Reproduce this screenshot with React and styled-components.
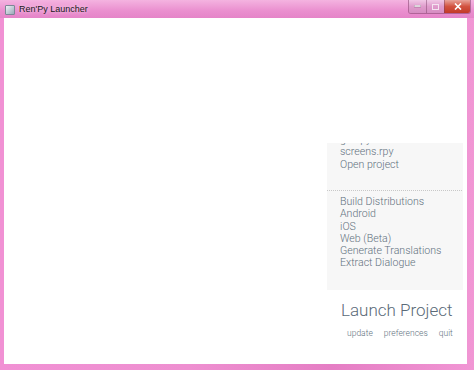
import React from "react";
import styled, { createGlobalStyle } from "styled-components";

const Global = createGlobalStyle`
  html, body { margin: 0; padding: 0; }
  body { width: 474px; height: 370px; overflow: hidden; font-family: Roboto, "Noto Sans", sans-serif; }
`;

const Frame = styled.div`
  width: 474px;
  height: 370px;
  display: flex;
  flex-direction: column;
  background: linear-gradient(90deg, #f191d4 0%, #ee8fd0 40%, #e57ec4 70%, #f196d4 100%);
  box-sizing: border-box;
`;

const TitleBar = styled.div`
  height: 18px;
  display: flex;
  align-items: flex-start;
  position: relative;
  background: linear-gradient(180deg, #f4b3e0 0%, #ea8fcf 60%, #e584c8 100%);
`;

const AppIcon = styled.div`
  width: 8px;
  height: 8px;
  margin: 5px 4px 0 5px;
  background: linear-gradient(135deg, #eef2f6, #9aa8b8);
  border: 1px solid #7c8896;
  border-radius: 1px;
`;

const Title = styled.div`
  font-family: "Liberation Sans", Arial, sans-serif;
  font-size: 9px;
  color: #1a1a1a;
  margin-top: 4px;
  text-shadow: 0 0 4px rgba(255,255,255,0.8);
`;

const Controls = styled.div`
  margin-left: auto;
  margin-right: 3px;
  display: flex;
  height: 13px;
  border: 1px solid rgba(120, 60, 100, 0.5);
  border-top: none;
  border-radius: 0 0 3px 3px;
  overflow: hidden;
`;

const CtrlButton = styled.div`
  width: ${p => p.$w}px;
  height: 13px;
  display: flex;
  align-items: center;
  justify-content: center;
  background: ${p => p.$close
    ? "linear-gradient(180deg, #e8a39a 0%, #d2523f 50%, #c23a28 100%)"
    : "linear-gradient(180deg, #f1c8e6 0%, #df9ccc 50%, #d68cc2 100%)"};
  border-left: ${p => p.$first ? "none" : "1px solid rgba(120,60,100,0.45)"};
`;

const Client = styled.div`
  flex: 1;
  margin: 0 7px 6px 4px;
  background: #ffffff;
  display: flex;
  justify-content: flex-end;
`;

const RightColumn = styled.div`
  width: 136px;
  margin-right: 4px;
  padding-top: 125px;
  display: flex;
  flex-direction: column;
`;

const Panel = styled.div`
  background: #f7f7f7;
  display: flex;
  flex-direction: column;
  height: 147px;
  box-sizing: border-box;
`;

const Viewport = styled.div`
  height: 40px;
  overflow: hidden;
  padding-left: 13px;
`;

const ScrollList = styled.div`
  margin-top: -9px;
  display: flex;
  flex-direction: column;
`;

const Item = styled.div`
  font-family: Roboto, "Noto Sans", sans-serif;
  font-weight: 300;
  font-size: 10.6px;
  line-height: 12.3px;
  color: #62717e;
  white-space: nowrap;
`;

const Separator = styled.div`
  margin: 7px 1px 5px 0;
  height: 0;
  border-top: 1px dotted #c8c8c8;
`;

const Group = styled.div`
  padding-left: 13px;
  display: flex;
  flex-direction: column;
`;

const Launch = styled.div`
  font-family: Roboto, "Noto Sans", sans-serif;
  font-weight: 300;
  font-size: 17px;
  color: #5a6a78;
  margin: 10px 0 0 14px;
  white-space: nowrap;
`;

const Footer = styled.div`
  display: flex;
  gap: 11px;
  margin: 8px 0 0 20px;
`;

const FooterLink = styled.div`
  font-family: Roboto, "Noto Sans", sans-serif;
  font-weight: 300;
  font-size: 8.5px;
  color: #62717e;
`;

export default function App() {
  return (
    <>
      <Global />
      <Frame>
        <TitleBar>
          <AppIcon />
          <Title>Ren'Py Launcher</Title>
          <Controls>
            <CtrlButton $w={17} $first>
              <svg width="7" height="3"><rect x="0" y="0" width="7" height="2" fill="#fff" stroke="#7a5a70" strokeWidth="0.5" /></svg>
            </CtrlButton>
            <CtrlButton $w={17}>
              <svg width="7" height="6"><rect x="0.5" y="0.5" width="6" height="5" fill="none" stroke="#f4e4f0" strokeWidth="1" /></svg>
            </CtrlButton>
            <CtrlButton $w={25} $close>
              <svg width="8" height="7" viewBox="0 0 8 7"><path d="M1 0.5 L7 6.5 M7 0.5 L1 6.5" stroke="#fff" strokeWidth="1.6" /></svg>
            </CtrlButton>
          </Controls>
        </TitleBar>
        <Client>
          <RightColumn>
            <Panel>
              <Viewport>
                <ScrollList>
                  <Item>gui.rpy</Item>
                  <Item>screens.rpy</Item>
                  <Item>Open project</Item>
                </ScrollList>
              </Viewport>
              <Separator />
              <Group>
                <Item>Build Distributions</Item>
                <Item>Android</Item>
                <Item>iOS</Item>
                <Item>Web (Beta)</Item>
                <Item>Generate Translations</Item>
                <Item>Extract Dialogue</Item>
              </Group>
            </Panel>
            <Launch>Launch Project</Launch>
            <Footer>
              <FooterLink>update</FooterLink>
              <FooterLink>preferences</FooterLink>
              <FooterLink>quit</FooterLink>
            </Footer>
          </RightColumn>
        </Client>
      </Frame>
    </>
  );
}
